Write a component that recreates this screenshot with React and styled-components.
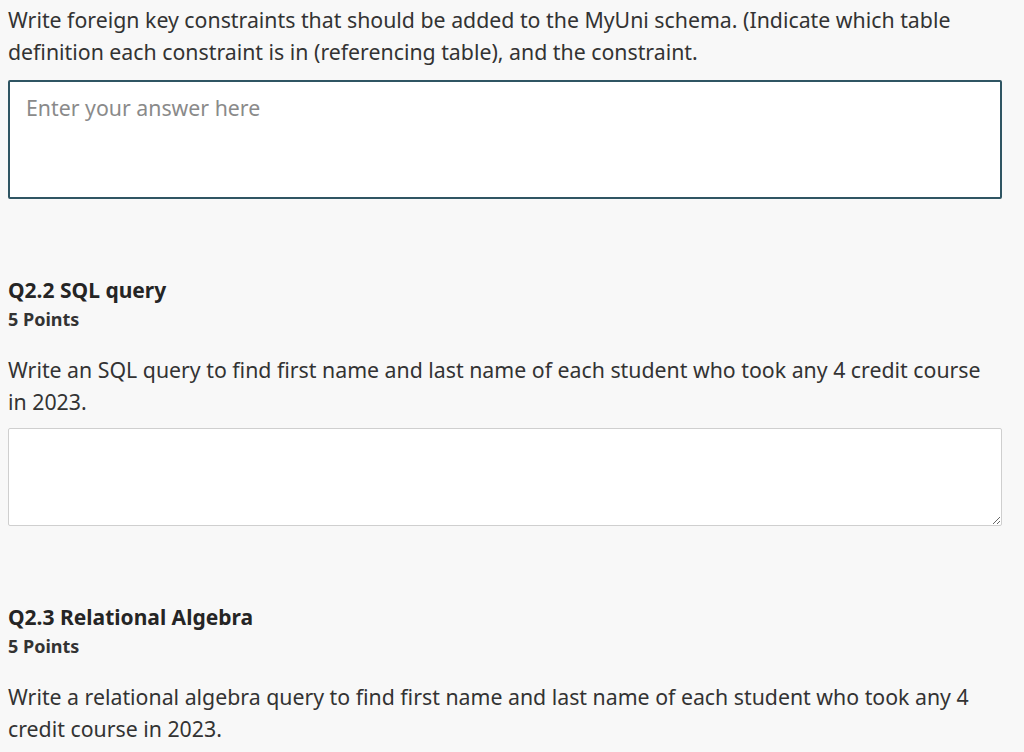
import React from "react";
import styled, { createGlobalStyle } from "styled-components";

const Global = createGlobalStyle`
  html, body {
    margin: 0;
    padding: 0;
    background: #f8f8f8;
  }
  body {
    font-family: "Noto Sans", "Open Sans", sans-serif;
    color: #333;
  }
`;

const Page = styled.div`
  padding: 4px 22px 0 8px;
`;

const Question = styled.section`
  display: flex;
  flex-direction: column;
  margin-bottom: 77px;
`;

const Title = styled.h3`
  margin: 0;
  font-size: 21px;
  line-height: 28px;
  font-weight: 700;
  color: #252525;
`;

const Points = styled.div`
  margin-top: 3px;
  font-size: 18px;
  line-height: 24px;
  font-weight: 700;
  color: #333;
`;

const Prompt = styled.p`
  margin: ${(p) => (p.$first ? "0" : "23px")} 0 0;
  font-size: 21.3px;
  line-height: 32px;
  color: #333;
`;

const Answer = styled.textarea`
  box-sizing: border-box;
  display: block;
  width: 100%;
  margin-top: ${(p) => (p.$focused ? "12px" : "10px")};
  height: ${(p) => (p.$focused ? "119px" : "98px")};
  padding: 10px 16px;
  font-family: "Noto Sans", "Open Sans", sans-serif;
  font-size: 21.3px;
  line-height: 32px;
  color: #333;
  background: #fff;
  border: ${(p) => (p.$focused ? "2px solid #2f5563" : "1px solid #cfcfcf")};
  border-radius: 2px;
  resize: ${(p) => (p.$focused ? "none" : "vertical")};
  outline: none;

  &::placeholder {
    color: #8a8a8a;
  }
`;

export default function App() {
  return (
    <>
      <Global />
      <Page>
        <Question>
          <Prompt $first>
            Write foreign key constraints that should be added to the MyUni
            schema. (Indicate which table definition each constraint is in
            (referencing table), and the constraint.
          </Prompt>
          <Answer $focused placeholder="Enter your answer here" autoFocus />
        </Question>

        <Question>
          <Title>Q2.2 SQL query</Title>
          <Points>5 Points</Points>
          <Prompt>
            Write an SQL query to find first name and last name of each student
            who took any 4 credit course in 2023.
          </Prompt>
          <Answer />
        </Question>

        <Question>
          <Title>Q2.3 Relational Algebra</Title>
          <Points>5 Points</Points>
          <Prompt>
            Write a relational algebra query to find first name and last name
            of each student who took any 4 credit course in 2023.
          </Prompt>
        </Question>
      </Page>
    </>
  );
}
